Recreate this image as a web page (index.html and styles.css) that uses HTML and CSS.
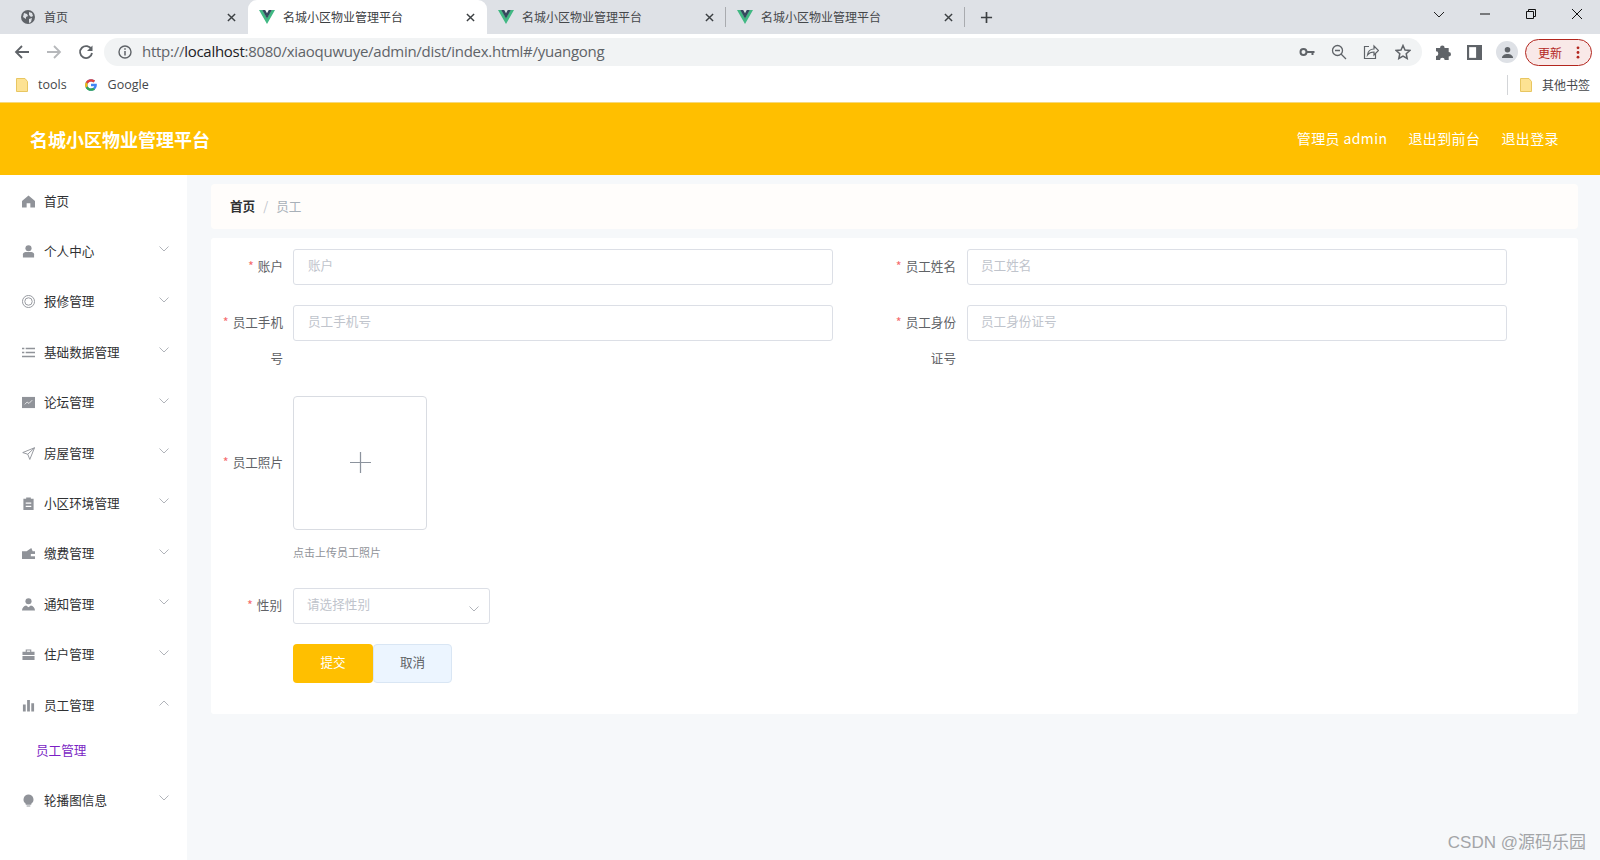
FILE: index.html
```html
<!DOCTYPE html>
<html lang="en">
<head>
    <meta charset="UTF-8">
    <title>名城小区物业管理平台</title>
    <link rel="stylesheet" href="styles.css">
</head>
<body>
    <svg class="defs" width="0" height="0">
        <symbol id="vue" viewBox="0 0 16 14">
            <path d="M0 0h3.4L8 8l4.6-8H16L8 14z" fill="#41b883"/>
            <path d="M3.2 0h3L8 3.2 9.8 0h3L8 8.4z" fill="#35495e"/>
        </symbol>
        <symbol id="close" viewBox="0 0 10 10">
            <path d="M1 1l8 8M9 1l-8 8" stroke="#3c4043" stroke-width="1.6" fill="none"/>
        </symbol>
        <symbol id="down" viewBox="0 0 10 6">
            <path d="M.5.5L5 5 9.500.5" stroke="#a8abb2" stroke-width=".9" fill="none"/>
        </symbol>
        <symbol id="folder" viewBox="0 0 12 14">
            <path d="M.5.5h8.500l2.500 3v10h-11z" fill="#fde293" stroke="#e8c661"/>
        </symbol>
    </svg>

    <!-- browser chrome -->
    <div class="tabbar">
        <div class="tab">
            <svg class="favicon" viewBox="0 0 14 14"><circle cx="7" cy="7" r="7" fill="#5f6368"/><path d="M3 3l3 1 1 2-2 1v2L2 7zM8 2l3 1 1 3-2 1-2-2zM8 9l3-1-1 4-2 1z" fill="#dee1e6"/></svg>
            <span class="tab-title">首页</span>
            <svg class="tab-close"><use href="#close"/></svg>
        </div>
        <div class="tab tab-active">
            <svg class="favicon"><use href="#vue"/></svg>
            <span class="tab-title">名城小区物业管理平台</span>
            <svg class="tab-close"><use href="#close"/></svg>
        </div>
        <div class="tab tab-sep">
            <svg class="favicon"><use href="#vue"/></svg>
            <span class="tab-title">名城小区物业管理平台</span>
            <svg class="tab-close"><use href="#close"/></svg>
        </div>
        <div class="tab tab-sep">
            <svg class="favicon"><use href="#vue"/></svg>
            <span class="tab-title">名城小区物业管理平台</span>
            <svg class="tab-close"><use href="#close"/></svg>
        </div>
        <svg class="new-tab" viewBox="0 0 14 14"><path d="M7 1v12M1 7h12" stroke="#3c4043" stroke-width="1.800"/></svg>
        <div class="window-btns">
            <svg viewBox="0 0 12 12"><path d="M1 4l5 5 5-5" stroke="#222" fill="none"/></svg>
            <svg viewBox="0 0 12 12"><path d="M1 6h10" stroke="#111"/></svg>
            <svg viewBox="0 0 12 12"><path d="M1.500 3.500h7v7h-7zM3.500 3.500v-2h7v7h-2" stroke="#111" fill="none"/></svg>
            <svg viewBox="0 0 12 12"><path d="M1 1l10 10M11 1L1 11" stroke="#111" fill="none"/></svg>
        </div>
    </div>

    <div class="toolbar">
        <svg class="nav-icon" viewBox="0 0 16 16"><path d="M15 8H2M8 2L2 8l6 6" stroke="#5f6368" stroke-width="1.800" fill="none"/></svg>
        <svg class="nav-icon" viewBox="0 0 16 16"><path d="M1 8h13M8 2l6 6-6 6" stroke="#b6b8bb" stroke-width="1.800" fill="none"/></svg>
        <svg class="nav-icon" viewBox="0 0 16 16"><path d="M13.500 5.500A6 6 0 1 0 14 9" stroke="#5f6368" stroke-width="1.800" fill="none"/><path d="M14.500 1.500v5.500H9z" fill="#5f6368"/></svg>
        <div class="omnibox">
            <svg class="info-icon" viewBox="0 0 14 14"><circle cx="7" cy="7" r="6" stroke="#5f6368" stroke-width="1.400" fill="none"/><path d="M7 6v4.500M7 3.300v1.500" stroke="#5f6368" stroke-width="1.500"/></svg>
            <span class="url">http://<b>localhost</b>:8080/xiaoquwuye/admin/dist/index.html#/yuangong</span>
            <div class="omni-actions">
                <svg viewBox="0 0 16 16"><circle cx="4.500" cy="8" r="3" stroke="#5f6368" stroke-width="2" fill="none"/><path d="M7 7h8.500v2h-1v2h-2V9H7z" fill="#5f6368"/></svg>
                <svg viewBox="0 0 16 16"><circle cx="6.500" cy="6.500" r="5" stroke="#5f6368" stroke-width="1.300" fill="none"/><path d="M10 10l5 5M4 6.500h5" stroke="#5f6368" stroke-width="1.300"/></svg>
                <svg viewBox="0 0 16 16"><path d="M6 2.500H1.500v12h11V10" stroke="#5f6368" stroke-width="1.200" fill="none"/><path d="M4.500 11c.5-4 3-6 6.500-6V2l4.500 4.500L11 11V8c-3 0-5 1-6.500 3z" stroke="#5f6368" stroke-width="1.200" fill="none"/></svg>
                <svg viewBox="0 0 16 16"><path d="M8 1.500l2 4.500 4.800.5-3.600 3.200 1 4.800L8 12.100l-4.200 2.400 1-4.800L1.200 6.500 6 6z" stroke="#5f6368" stroke-width="1.500" fill="none"/></svg>
            </div>
        </div>
        <div class="toolbar-right">
            <svg class="ext-icon" viewBox="1 2 13 13"><path d="M1 4.500h3.500a2 2 0 1 1 4 0H12V8a2 2 0 1 1 0 4v3H8.500a2 2 0 1 0-4 0H1v-3.500a2 2 0 1 0 0-4z" fill="#5f6368"/></svg>
            <svg class="ext-icon" viewBox="0 0 14 14"><path d="M0 0h14v14H0z" fill="#5f6368"/><path d="M2 2h6.500v10H2z" fill="#fff"/></svg>
            <div class="avatar">
                <svg viewBox="0 0 14 14"><circle cx="7" cy="4" r="3" fill="#5f6368"/><path d="M1 13c0-3 3-4.500 6-4.500s6 1.500 6 4.500z" fill="#5f6368"/></svg>
            </div>
            <div class="update-pill">
                <span>更新</span>
                <svg viewBox="0 0 4 14"><circle cx="2" cy="2" r="1.500" fill="#b3261e"/><circle cx="2" cy="7" r="1.500" fill="#b3261e"/><circle cx="2" cy="12" r="1.500" fill="#b3261e"/></svg>
            </div>
        </div>
    </div>

    <div class="bookmarks">
        <svg class="bm-folder"><use href="#folder"/></svg>
        <span class="bm-label">tools</span>
        <svg class="bm-google" viewBox="0 0 48 48">
            <path d="M43.600 20H24v8.500h11.300C33.700 33.300 29.300 36 24 36c-6.600 0-12-5.400-12-12s5.400-12 12-12c3 0 5.800 1.100 7.900 3l6-6C34.400 5.800 29.500 4 24 4 13 4 4 13 4 24s9 20 20 20 20-9 20-20c0-1.300-.1-2.700-.4-4z" fill="#4285f4"/>
            <path d="M6.300 14.700l7 5.100C15.100 15.200 19.200 12 24 12c3 0 5.800 1.100 7.900 3l6-6C34.400 5.800 29.500 4 24 4 16.300 4 9.700 8.300 6.300 14.700z" fill="#ea4335"/>
            <path d="M24 44c5.400 0 10.200-1.700 13.800-5l-6.500-5.400C29.300 35.100 26.800 36 24 36c-5.200 0-9.600-3.300-11.300-8l-7 5.300C9.100 39.600 16 44 24 44z" fill="#34a853"/>
            <path d="M12.700 28c-.4-1.300-.7-2.600-.7-4s.3-2.900.8-4.200l-7-5.100C4.700 17.100 4 20.500 4 24s.7 6.500 1.700 9.300z" fill="#fbbc05"/>
        </svg>
        <span class="bm-label">Google</span>
        <div class="bm-other">
            <svg class="bm-folder"><use href="#folder"/></svg>
            <span class="bm-label bm-small">其他书签</span>
        </div>
    </div>

    <!-- app -->
    <header class="app-header">
        <div class="app-title">名城小区物业管理平台</div>
        <nav class="app-links">
            <a>管理员 admin</a>
            <a>退出到前台</a>
            <a>退出登录</a>
        </nav>
    </header>

    <div class="app-body">
        <aside class="sidebar">
            <div class="menu-item">
                <svg class="menu-icon" viewBox="0 0 14 14"><path d="M7 .5L14 6.500v7H9V9H5v4.500H0v-7z"/></svg>首页
            </div>
            <div class="menu-item">
                <svg class="menu-icon" viewBox="0 0 14 14"><circle cx="7" cy="3.500" r="3.300"/><path d="M1 10c0-1.500 1.500-2.500 3-2.500h6c1.500 0 3 1 3 2.500v3.500H1z"/></svg>个人中心
                <svg class="menu-arrow"><use href="#down"/></svg>
            </div>
            <div class="menu-item">
                <svg class="menu-icon menu-icon-line" viewBox="0 0 14 14"><circle cx="7" cy="7" r="6.500"/><circle cx="7" cy="7" r="4"/></svg>报修管理
                <svg class="menu-arrow"><use href="#down"/></svg>
            </div>
            <div class="menu-item">
                <svg class="menu-icon" viewBox="0 0 14 14"><path d="M4 2h10v1.600H4zM4 6.200h10v1.600H4zM0 10.500h14v1.600H0zM0 2h2.500v1.600H0zM0 6.200h2.500v1.600H0z"/></svg>基础数据管理
                <svg class="menu-arrow"><use href="#down"/></svg>
            </div>
            <div class="menu-item">
                <svg class="menu-icon" viewBox="0 0 14 14"><path d="M0 1h14v12H0z"/><path d="M3 9l2.500-2.500 2 1.500L11 4.500" stroke="#fff" fill="none" stroke-width=".8"/></svg>论坛管理
                <svg class="menu-arrow"><use href="#down"/></svg>
            </div>
            <div class="menu-item">
                <svg class="menu-icon menu-icon-line" viewBox="0 0 14 14"><path d="M13.500.8L.8 6l5.400 1.800 2.200 5.600zM6.200 7.800L13.500.8"/></svg>房屋管理
                <svg class="menu-arrow"><use href="#down"/></svg>
            </div>
            <div class="menu-item">
                <svg class="menu-icon" viewBox="0 0 14 14"><path d="M1.500 2H4.500V.5h5V2h3v12h-11z"/><path d="M4 6h6v1.200H4zM4 9.500h6v1.200H4z" fill="#fff"/></svg>小区环境管理
                <svg class="menu-arrow"><use href="#down"/></svg>
            </div>
            <div class="menu-item">
                <svg class="menu-icon" viewBox="0 0 14 14"><path d="M0 4.500h5L10 1l1.500 3.500H14V13H0z"/><path d="M9.500 7.500H14v2.500H9.500z" fill="#fff"/></svg>缴费管理
                <svg class="menu-arrow"><use href="#down"/></svg>
            </div>
            <div class="menu-item">
                <svg class="menu-icon" viewBox="0 0 14 14"><circle cx="7" cy="3.500" r="3.300"/><path d="M0 13.500c0-3 2-5 4.500-5.500L7 10l2.500-2c2.500.5 4.500 2.500 4.500 5.500z"/></svg>通知管理
                <svg class="menu-arrow"><use href="#down"/></svg>
            </div>
            <div class="menu-item">
                <svg class="menu-icon" viewBox="0 0 14 14"><path d="M4 1.500h6V4h3.500v3.500H.5V4H4zM5.200 2.700V4h3.600V2.700zM.5 8.500h13V13H.5z" fill-rule="evenodd"/></svg>住户管理
                <svg class="menu-arrow"><use href="#down"/></svg>
            </div>
            <div class="menu-item">
                <svg class="menu-icon" viewBox="0 0 14 14"><path d="M1 6h3v7.500H1zM5.500 1h3v12.500h-3zM10 4.500h3v9h-3z"/></svg>员工管理
                <svg class="menu-arrow menu-arrow-up"><use href="#down"/></svg>
            </div>
            <div class="submenu-item">员工管理</div>
            <div class="menu-item">
                <svg class="menu-icon" viewBox="0 0 14 14"><path d="M7 .5a5.500 5.500 0 0 1 3 10v1H4v-1A5.500 5.500 0 0 1 7 .5zM5 12.500h4v1H5z"/></svg>轮播图信息
                <svg class="menu-arrow"><use href="#down"/></svg>
            </div>
        </aside>

        <main class="content">
            <div class="breadcrumb">
                <span class="crumb-home">首页</span>
                <span class="crumb-sep">/</span>
                <span class="crumb-current">员工</span>
            </div>

            <form class="form-card">
                <div class="form-row">
                    <div class="field">
                        <label class="field-label"><i>*</i>账户</label>
                        <div class="input">账户</div>
                    </div>
                    <div class="field">
                        <label class="field-label"><i>*</i>员工姓名</label>
                        <div class="input">员工姓名</div>
                    </div>
                </div>
                <div class="form-row">
                    <div class="field">
                        <label class="field-label"><i>*</i>员工手机号</label>
                        <div class="input">员工手机号</div>
                    </div>
                    <div class="field">
                        <label class="field-label"><i>*</i>员工身份证号</label>
                        <div class="input">员工身份证号</div>
                    </div>
                </div>
                <div class="field field-upload">
                    <label class="field-label label-mid"><i>*</i>员工照片</label>
                    <div>
                        <div class="upload-box">
                            <svg viewBox="0 0 22 22"><path d="M11 0v22M0 11h22" stroke="#8c939d" stroke-width="1.300"/></svg>
                        </div>
                        <div class="upload-hint">点击上传员工照片</div>
                    </div>
                </div>
                <div class="field field-select">
                    <label class="field-label"><i>*</i>性别</label>
                    <div class="input select">
                        请选择性别
                        <svg class="select-arrow"><use href="#down"/></svg>
                    </div>
                </div>
                <div class="form-actions">
                    <button type="button" class="btn btn-primary">提交</button>
                    <button type="button" class="btn btn-plain">取消</button>
                </div>
            </form>
        </main>
    </div>

    <div class="watermark">CSDN @源码乐园</div>
</body>
</html>
```

FILE: styles.css
```css
:root {
    --brand: #ffbf00;
    --icon-gray: #909399;
    --border: #dcdfe6;
    --placeholder: #c0c4cc;
    --cjk: "Noto Sans CJK SC", sans-serif;
}

* {
    box-sizing: border-box;
}

body {
    margin: 0;
    width: 1600px;
    height: 860px;
    overflow: hidden;
    display: flex;
    flex-direction: column;
    font-family: "Liberation Sans", "Noto Sans CJK SC", sans-serif;
    background: #f6f8fa;
}

.defs {
    position: absolute;
}

/* browser tabs */
.tabbar {
    height: 34px;
    display: flex;
    align-items: stretch;
    background: #dee1e6;
    padding-left: 9px;
}

.tab {
    width: 239px;
    display: flex;
    align-items: center;
    padding-left: 11px;
    padding-right: 12px;
    font: 12px var(--cjk);
    color: #45474a;
}

.tab-active {
    background: #fff;
    border-radius: 9px 9px 0 0;
    color: #3c4043;
}

.tab-sep {
    position: relative;
}

.tab-sep::after {
    content: "";
    position: absolute;
    right: 0;
    top: 7px;
    height: 20px;
    width: 1px;
    background: #a9abaf;
}

.favicon {
    width: 16px;
    height: 14px;
    flex: none;
    margin-right: 8px;
}

.tab-title {
    flex: 1;
    white-space: nowrap;
    padding-bottom: 2px;
}

.tab-close {
    width: 9px;
    height: 9px;
    flex: none;
}

.new-tab {
    width: 13px;
    height: 13px;
    align-self: center;
    margin-left: 15px;
}

.window-btns {
    margin-left: auto;
    display: flex;
    align-items: center;
    gap: 34px;
    padding-right: 17px;
    height: 28px;
}

.window-btns svg {
    width: 12px;
    height: 12px;
}

/* toolbar */
.toolbar {
    height: 36px;
    background: #fff;
    display: flex;
    align-items: center;
    padding-left: 14px;
}

.nav-icon {
    width: 16px;
    height: 16px;
    margin-right: 16px;
    flex: none;
}

.omnibox {
    width: 1318px;
    height: 28px;
    margin-left: -6px;
    background: #f1f3f4;
    border-radius: 14px;
    display: flex;
    align-items: center;
    padding-left: 14px;
}

.info-icon {
    width: 14px;
    height: 14px;
    margin-right: 10px;
}

.url {
    font: 15px "Open Sans", sans-serif;
    letter-spacing: -.27px;
    color: #5f6368;
    padding-bottom: 2px;
}

.url b {
    font-weight: 400;
    color: #202124;
}

.omni-actions {
    margin-left: auto;
    display: flex;
    gap: 16px;
    padding-right: 11px;
}

.omni-actions svg {
    width: 16px;
    height: 16px;
}

.toolbar-right {
    display: flex;
    align-items: center;
    margin-left: 14px;
}

.ext-icon {
    width: 15px;
    height: 15px;
    margin-right: 16px;
}

.avatar {
    width: 22px;
    height: 22px;
    border-radius: 50%;
    background: #dee1e6;
    display: flex;
    align-items: center;
    justify-content: center;
    margin-left: -2px;
    margin-right: 7px;
}

.avatar svg {
    width: 13px;
    height: 13px;
}

.update-pill {
    width: 67px;
    height: 27px;
    border: 1px solid #b3261e;
    border-radius: 14px;
    background: #f9e9e8;
    display: flex;
    align-items: center;
    justify-content: space-between;
    padding: 0 11px 0 12px;
    font: 12px var(--cjk);
    color: #b3261e;
}

.update-pill svg {
    width: 4px;
    height: 13px;
}

/* bookmarks */
.bookmarks {
    height: 33px;
    background: #fff;
    display: flex;
    align-items: center;
    padding-left: 16px;
    padding-bottom: 3px;
    border-bottom: 1px solid #f6d97d;
}

.bm-folder {
    width: 12px;
    height: 14px;
    margin-right: 10px;
}

.bm-label {
    font: 12.5px "Open Sans", "Noto Sans CJK SC", sans-serif;
    color: #45474a;
}

.bm-google {
    width: 14px;
    height: 14px;
    margin: 0 10px 0 17px;
}

.bm-other {
    margin-left: auto;
    display: flex;
    align-items: center;
    height: 20px;
    border-left: 1px solid #d3d5d8;
    padding-left: 12px;
    margin-right: 10px;
}

.bm-small {
    font-size: 12px;
}

/* app header */
.app-header {
    height: 72px;
    background: var(--brand);
    display: flex;
    align-items: center;
    justify-content: space-between;
    padding: 0 41px 0 30px;
    color: #fff;
    font-family: var(--cjk);
}

.app-title {
    font-size: 18px;
    font-weight: 700;
}

.app-links {
    display: flex;
    gap: 21px;
    font-size: 14px;
    letter-spacing: .4px;
    padding-bottom: 2px;
}

.app-body {
    flex: 1;
    display: flex;
    min-height: 0;
}

/* side menu */
.sidebar {
    width: 187px;
    background: #fff;
    font: 12.6px var(--cjk);
    color: #303133;
    flex: none;
}

.menu-item {
    height: 50.4px;
    display: flex;
    align-items: center;
    padding-left: 22px;
    position: relative;
}

.menu-icon {
    width: 13px;
    height: 13px;
    margin-right: 9px;
    fill: var(--icon-gray);
    flex: none;
    transform: translateY(1px);
}

.menu-icon-line {
    fill: none;
    stroke: var(--icon-gray);
}

.menu-arrow {
    position: absolute;
    right: 18px;
    top: 21px;
    width: 10px;
    height: 6px;
}

.menu-arrow-up {
    transform: rotate(180deg);
}

.submenu-item {
    height: 45px;
    display: flex;
    align-items: center;
    padding-left: 36px;
    padding-bottom: 4px;
    color: #7b1fc4;
}

/* main */
.content {
    flex: 1;
    padding: 9px 22px 0 24px;
    font-family: var(--cjk);
}

.breadcrumb {
    height: 45px;
    background: #fffdfb;
    border-radius: 4px;
    display: flex;
    align-items: center;
    padding-left: 19px;
    padding-bottom: 3px;
    font-size: 12.6px;
}

.crumb-home {
    color: #303133;
    font-weight: 700;
}

.crumb-sep {
    color: #c0c4cc;
    margin: 0 8px;
}

.crumb-current {
    color: #a8b0b8;
}

.form-card {
    margin-top: 9px;
    height: 476px;
    background: #fff;
    border-radius: 3px;
    padding-top: 11px;
}

.form-row {
    display: grid;
    grid-template-columns: 674px 1fr;
}

.field {
    display: flex;
    align-items: flex-start;
    margin-bottom: 20px;
    padding-left: 10px;
}

.field-label {
    width: 62px;
    flex: none;
    margin: -1px 10px 1px 0;
    text-align: right;
    font-size: 12.6px;
    line-height: 35.5px;
    color: #606266;
}

.field + .field .field-label {
    margin-left: -1px;
    margin-right: 11px;
}

.field + .field .input {
    padding-left: 13px;
}

.field-label i {
    font-style: normal;
    color: #f56c6c;
    margin-right: 4px;
}

.label-mid {
    margin-top: 48px;
}

.input {
    width: 540px;
    height: 36px;
    border: 1px solid var(--border);
    border-radius: 3px;
    background: #fff;
    padding-left: 14px;
    font-size: 12.6px;
    line-height: 30px;
    color: var(--placeholder);
}

.upload-box {
    width: 134px;
    height: 134px;
    border: 1px solid #d9dce2;
    border-radius: 4px;
    display: flex;
    align-items: center;
    justify-content: center;
    padding-bottom: 2px;
}

.upload-box svg {
    width: 21px;
    height: 21px;
}

.upload-hint {
    height: 38px;
    font-size: 11px;
    line-height: 44px;
    color: #909399;
}

.select {
    width: 197px;
    position: relative;
}

.select-arrow {
    position: absolute;
    right: 10px;
    top: 17px;
    width: 10px;
    height: 6px;
}

.form-actions {
    display: flex;
    padding-left: 82px;
}

.btn {
    height: 39px;
    font: 12.6px var(--cjk);
    border-radius: 4px;
    border: 1px solid transparent;
    padding: 0 0 4px;
}

.btn-primary {
    width: 80px;
    background: var(--brand);
    color: #fff;
}

.btn-plain {
    width: 79px;
    background: #ecf5ff;
    border-color: #d9e6f4;
    color: #606266;
}

.watermark {
    position: absolute;
    right: 14px;
    top: 828px;
    font: 17px "Liberation Sans", "Noto Sans CJK SC", sans-serif;
    color: #a3a5a8;
}
```
